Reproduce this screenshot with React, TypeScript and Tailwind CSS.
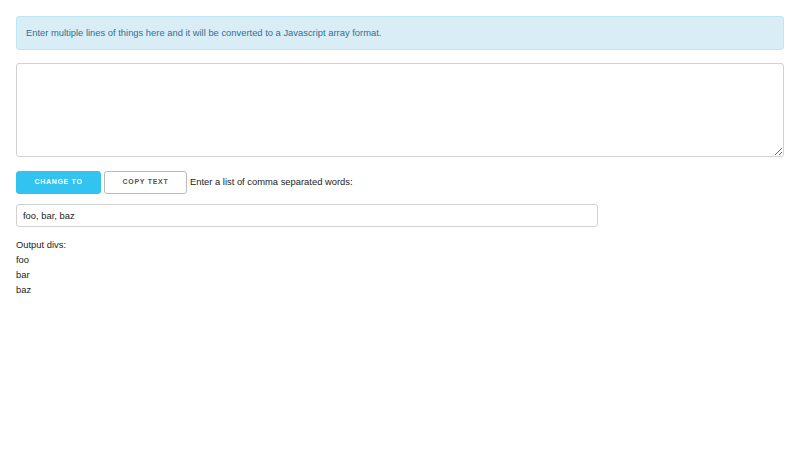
import { useState } from 'react'

export default function App() {
  const [words, setWords] = useState('foo, bar, baz')
  const [lines, setLines] = useState('')

  const items = words.split(',').map(w => w.trim()).filter(Boolean)

  return (
    <div className="min-h-[450px] bg-white px-4 pt-4 text-[9.4px] text-[#222] font-['Liberation_Sans',Arial,sans-serif]">
      <div className="h-[34px] flex items-center px-[9px] bg-[#d9edf7] border border-[#bce8f1] rounded-[3px] text-[#31708f]">
        Enter multiple lines of things here and it will be converted to a Javascript array format.
      </div>

      <textarea
        value={lines}
        onChange={e => setLines(e.target.value)}
        className="mt-[13px] block w-full h-[94px] border border-[#d1d1d1] rounded-[3px] px-[6px] py-[4px] outline-none"
      />

      <div className="mt-[14px] flex items-center">
        <button className="h-[23px] w-[85px] bg-[#33c3f0] border border-[#33c3f0] rounded-[3px] text-white text-[7px] font-bold tracking-[0.7px] uppercase">
          Change To
        </button>
        <button className="ml-[3px] h-[23px] w-[83px] bg-white border border-[#bbb] rounded-[3px] text-[#555] text-[7px] font-bold tracking-[0.7px] uppercase">
          Copy Text
        </button>
        <span className="ml-[3px]">Enter a list of comma separated words:</span>
      </div>

      <input
        value={words}
        onChange={e => setWords(e.target.value)}
        className="mt-[10px] block w-[582px] h-[23px] border border-[#d1d1d1] rounded-[3px] px-[6px] outline-none"
      />

      <div className="mt-[10px] leading-[15px]">
        <div>Output divs:</div>
        {items.map((w, i) => (
          <div key={i}>{w}</div>
        ))}
      </div>
    </div>
  )
}
